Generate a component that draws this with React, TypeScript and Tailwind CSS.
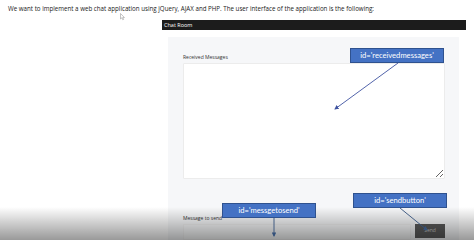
import React from 'react'

const Tag = ({ text, className }: { text: string; className: string }) => (
  <div
    className={`absolute flex items-center justify-center bg-[#4472c4] border border-[#2f528f] text-white text-[7.6px] leading-none ${className}`}
    style={{ fontFamily: 'Lato, "Open Sans", sans-serif' }}
  >
    {text}
  </div>
)

export default function App() {
  return (
    <div
      className="relative w-[474px] h-[240px] overflow-hidden bg-white flex flex-col"
      style={{ fontFamily: '"Open Sans", "Noto Sans", sans-serif' }}
    >
      {/* intro text */}
      <p className="pt-[5px] pl-[8px] text-[6.2px] leading-[8px] text-[#222] whitespace-nowrap">
        We want to implement a web chat application using jQuery, AJAX and PHP. The user interface of the application is the following:
      </p>

      {/* header bar */}
      <div className="mt-[7px] ml-[162px] w-[304px] h-[15px] bg-[#1c1c1c] flex items-center pl-[2px]">
        <span className="text-[5.5px] text-white">Chat Room</span>
      </div>

      {/* panel */}
      <div className="mt-[7px] ml-[168px] w-[291px] flex-1 bg-[#f6f7f9] pl-[15px] pr-[14px] pt-[17px] flex flex-col">
        <label className="text-[5px] leading-[6px] text-[#333]">Received Messages</label>
        <textarea
          readOnly
          className="mt-[3px] h-[116px] w-full bg-white border border-[#ececec] rounded-[1px] outline-none"
        />
        <label className="mt-[36px] text-[5px] leading-[6px] text-[#333]">Message to send</label>
        <div className="mt-[3px] flex items-start gap-[4px]">
          <div className="flex-1 h-[16px] bg-white/40 border border-[#ececec]/60" />
          <button className="w-[30px] h-[14px] bg-[#5a5a5a] text-[5px] text-[#c8c8c8] flex items-center justify-center">
            Send
          </button>
        </div>
      </div>

      {/* bottom shading of the video frame */}
      <div className="absolute inset-x-0 bottom-0 h-[33px] bg-linear-to-b from-black/0 to-black/40 pointer-events-none" />

      {/* annotations */}
      <Tag text="id='receivedmessages'" className="left-[350px] top-[48px] w-[94px] h-[15px]" />
      <Tag text="id='sendbutton'" className="left-[353px] top-[193px] w-[94px] h-[15px]" />
      <Tag text="id='messgetosend'" className="left-[222px] top-[203px] w-[94px] h-[15px]" />

      <svg className="absolute inset-0 pointer-events-none" width="474" height="240" viewBox="0 0 474 240">
        <defs>
          <marker id="ah" markerWidth="5" markerHeight="5" refX="4" refY="2.5" orient="auto">
            <path d="M0,0 L5,2.5 L0,5 Z" fill="#3e52a0" />
          </marker>
          <marker id="ah2" markerWidth="5" markerHeight="5" refX="4" refY="2.5" orient="auto">
            <path d="M0,0 L5,2.5 L0,5 Z" fill="#33507a" />
          </marker>
        </defs>
        <line x1="398" y1="63" x2="335" y2="109" stroke="#3e52a0" strokeWidth="0.9" markerEnd="url(#ah)" />
        <line x1="400" y1="208" x2="427" y2="230" stroke="#33507a" strokeWidth="0.9" markerEnd="url(#ah2)" />
        <line x1="274" y1="218" x2="274" y2="236" stroke="#33507a" strokeWidth="0.9" markerEnd="url(#ah2)" />
        {/* mouse cursor */}
        <path d="M120.5,13.5 L120.5,19 L121.8,17.8 L122.8,19.8 L123.6,19.4 L122.7,17.5 L124.4,17.5 Z" fill="#fff" stroke="#888" strokeWidth="0.5" />
      </svg>
    </div>
  )
}
